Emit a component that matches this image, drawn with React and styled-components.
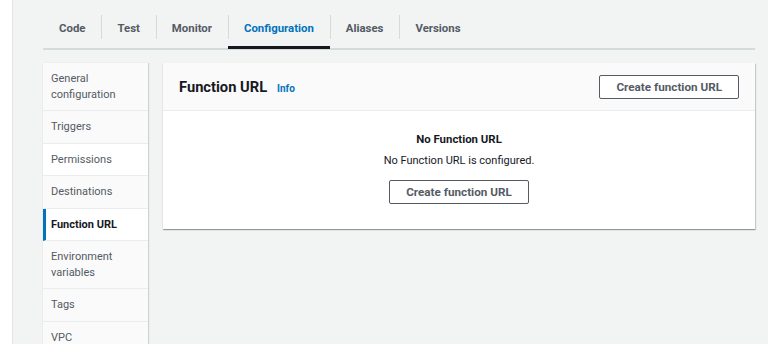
import styled, { createGlobalStyle } from 'styled-components'

const GlobalStyle = createGlobalStyle`
  html, body {
    margin: 0;
    background: #f2f3f3;
    font-family: Roboto, "Open Sans", sans-serif;
    color: #16191f;
  }
`

const tabs = ['Code', 'Test', 'Monitor', 'Configuration', 'Aliases', 'Versions']

const menu = [
  { label: 'General configuration' },
  { label: 'Triggers' },
  { label: 'Permissions', hover: true },
  { label: 'Destinations' },
  { label: 'Function URL', active: true },
  { label: 'Environment variables' },
  { label: 'Tags' },
  { label: 'VPC' },
]

function App() {
  return (
    <Page>
      <GlobalStyle />
      <Rail />
      <Main>
        <TabBar>
          { tabs.map((t, i) => (
            <Tab key={ t } first={ i === 0 } active={ t === 'Configuration' }>{ t }</Tab>
          )) }
        </TabBar>
        <Body>
          <SideNav>
            { menu.map((m) => (
              <NavItem key={ m.label } active={ m.active } hover={ m.hover }>{ m.label }</NavItem>
            )) }
          </SideNav>
          <Panel>
            <PanelHeader>
              <Title>
                <h2>Function URL</h2>
                <InfoLink>Info</InfoLink>
              </Title>
              <Button>Create function URL</Button>
            </PanelHeader>
            <PanelBody>
              <strong>No Function URL</strong>
              <p>No Function URL is configured.</p>
              <Button>Create function URL</Button>
            </PanelBody>
          </Panel>
        </Body>
      </Main>
    </Page>
  )
}

// Styled Components
const Page = styled.div`
  display: flex;
  height: 344px;
  overflow: hidden;
`

const Rail = styled.div`
  width: 12px;
  flex-shrink: 0;
  background: #ffffff;
  border-right: 1px solid #e3e5e5;
`

const Main = styled.div`
  flex: 1;
  padding: 0 13px 0 30px;
`

const TabBar = styled.div`
  display: flex;
  height: 48px;
  border-bottom: 2px solid #d5dbdb;
`

const Tab = styled.div`
  position: relative;
  display: flex;
  align-items: center;
  padding: 7px 16px 0;
  font-size: 11.4px;
  font-weight: 700;
  color: ${ (p) => (p.active ? '#0073bb' : '#545b64') };

  &::before {
    content: '';
    display: ${ (p) => (p.first ? 'none' : 'block') };
    position: absolute;
    left: 0;
    top: 15px;
    height: 24px;
    width: 1px;
    background: #d5dbdb;
  }

  &::after {
    content: '';
    display: ${ (p) => (p.active ? 'block' : 'none') };
    position: absolute;
    left: 0;
    right: 0;
    bottom: -1px;
    height: 3px;
    background: #16191f;
  }
`

const Body = styled.div`
  display: flex;
  align-items: flex-start;
  gap: 15px;
  padding-top: 13px;
`

const SideNav = styled.div`
  width: 105px;
  flex-shrink: 0;
  background: #fafafa;
  box-shadow: 0 1px 1px rgba(0, 28, 36, 0.2), 1px 0 1px rgba(0, 28, 36, 0.12);
`

const NavItem = styled.div`
  padding: 8px 6px 8px ${ (p) => (p.active ? '5px' : '8px') };
  font-size: 11px;
  line-height: 15.5px;
  color: ${ (p) => (p.active ? '#16191f' : '#545b64') };
  font-weight: ${ (p) => (p.active ? 700 : 400) };
  background: ${ (p) => (p.active || p.hover ? '#ffffff' : 'transparent') };
  border-left: ${ (p) => (p.active ? '3px solid #0073bb' : 'none') };
  border-bottom: 1px solid #eaeded;
`

const Panel = styled.div`
  flex: 1;
  background: #ffffff;
  box-shadow: 0 1px 1px rgba(0, 28, 36, 0.3), 1px 1px 1px rgba(0, 28, 36, 0.15);
`

const PanelHeader = styled.div`
  display: flex;
  align-items: center;
  justify-content: space-between;
  height: 47px;
  padding: 0 16px;
  background: #fafafa;
  border-bottom: 1px solid #eaeded;
`

const Title = styled.div`
  display: flex;
  align-items: baseline;
  gap: 10px;

  h2 {
    margin: 0;
    font-size: 14.7px;
    font-weight: 700;
    color: #16191f;
  }
`

const InfoLink = styled.span`
  font-size: 10px;
  font-weight: 700;
  color: #0073bb;
`

const Button = styled.button`
  font-family: inherit;
  font-size: 11.7px;
  font-weight: 700;
  color: #545b64;
  background: #ffffff;
  border: 1px solid #545b64;
  border-radius: 2px;
  height: 24px;
  padding: 0 16px;
  cursor: pointer;
`

const PanelBody = styled.div`
  display: flex;
  flex-direction: column;
  align-items: center;
  padding: 20px 0 25px;

  strong {
    font-size: 11.4px;
    line-height: 16px;
    font-weight: 700;
  }

  p {
    margin: 6px 0 11px;
    font-size: 11px;
    line-height: 16px;
    color: #16191f;
  }
`

export default App
